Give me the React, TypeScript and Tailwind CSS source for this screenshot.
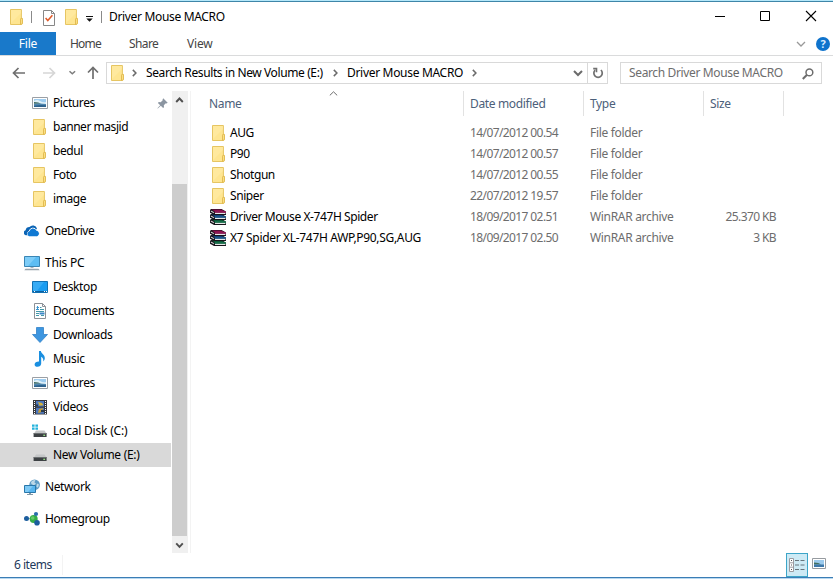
import React from 'react';

interface NavItem {
  label: string;
  icon: React.ReactNode;
  root?: boolean;
  pinned?: boolean;
  selected?: boolean;
  tracking?: string;
}

interface FileRow {
  name: string;
  date: string;
  type: string;
  size?: string;
  tracking?: string;
}

// === Icons ===

function Folder() {
  return (
    <svg width="16" height="16" viewBox="0 0 16 16" className="shrink-0">
      <path d="M1.5 .5h10.9v10l.1 5H1.5z" fill="#fee591" stroke="#e6c562" />
      <path d="M2 1h10v3L2 14z" fill="#ffeba6" opacity=".6" />
      <path d="M11.5 10.2q0-.8.8-.8h1.2v5.3l-2 .9z" fill="#fbdf83" stroke="#e0b84c" strokeWidth=".9" />
    </svg>
  );
}

function Picture() {
  return (
    <svg width="16" height="16" viewBox="0 0 16 16" className="shrink-0">
      <path d="M.5 2.5h15v11H.5z" fill="#fff" stroke="#9a9fa5" />
      <path d="M2 4h12v8H2z" fill="#9fcdf0" />
      <path d="M2 6q3-2 6 0t6 1v2H2z" fill="#e0f1f9" />
      <path d="M2 7q5 .2 7 1.8H2z" fill="#3d6961" />
      <path d="M2 9q6-1 12 0v3H2z" fill="#5087b0" />
      <path d="M2 10.8q6-1.4 12-.6V12H2z" fill="#2e628d" />
    </svg>
  );
}

function OneDrive() {
  return (
    <svg width="16" height="16" viewBox="0 0 16 16" className="shrink-0">
      <path d="M1.8 12.2A2.6 2.6 0 0 1 1.6 7.2 3.9 3.9 0 0 1 5.5 4 4.4 4.4 0 0 1 13 5.5L8 12z" fill="#0b64b5" />
      <path d="M5.6 13.5a2.8 2.8 0 0 1-.3-5.4 3.8 3.8 0 0 1 7.2-.7 3.1 3.1 0 0 1 .4 6.1z" fill="#1079d3" stroke="#fff" />
      <path d="M5.7 13.2a2.4 2.4 0 1 1 .1-4.8 3.4 3.4 0 0 1 6.4-.6 2.8 2.8 0 0 1 .8 5.4z" fill="#1079d3" />
    </svg>
  );
}

function ThisPc() {
  return (
    <svg width="16" height="16" viewBox="0 0 16 16" className="shrink-0">
      <path d="M.5 1.5h15v10H.5z" fill="#5dbdf3" stroke="#3a86b5" />
      <path d="M1 2h11L4 11H1z" fill="#8dd4fa" opacity=".7" />
      <path d="M6.5 12h3v1h-3z" fill="#a9b4bd" />
      <path d="M1.5 13.8h13l1.2 1.4H.3z" fill="#98a4ad" />
    </svg>
  );
}

function Desktop() {
  return (
    <svg width="16" height="16" viewBox="0 0 16 16" className="shrink-0">
      <path d="M.5 2.5h15v11H.5z" fill="#1b9df1" stroke="#1272b4" />
      <path d="M1 3h11L5 12H1z" fill="#4cb5f8" opacity=".6" />
      <path d="M1 12h14v1H1z" fill="#0d5f9e" />
      <path d="M2 12h1v1H2zM12 12h1v1h-1zM14 12h1v1h-1z" fill="#fff" />
    </svg>
  );
}

function Document() {
  return (
    <svg width="16" height="16" viewBox="0 0 16 16" className="shrink-0">
      <path d="M2.5 .5h8l3 3v12h-11z" fill="#fff" stroke="#8c9197" />
      <path d="M10.5 .5v3h3" fill="none" stroke="#8c9197" />
      <path d="M4 6.5h3M4.5 4.5H7M5.5 3v3" stroke="#3b95cf" fill="none" />
      <path d="M8 6.5h4M8 4.5h1.5M4 8.5h8M4 10.5h3M4 12.5h3M9 12.5h3" stroke="#49a" fill="none" />
      <path d="M7.5 9.5h5v2h-5z" fill="#3a87c8" />
    </svg>
  );
}

function Download() {
  return (
    <svg width="16" height="16" viewBox="0 0 16 16" className="shrink-0">
      <path d="M4.5 .5h7v7h4L8 15.5.5 7.5h4z" fill="#3d96e0" stroke="#3182c8" strokeWidth=".8" />
    </svg>
  );
}

function Music() {
  return (
    <svg width="16" height="16" viewBox="0 0 16 16" className="shrink-0">
      <path d="M7 0h1.9c.3 2.7 3.9 3.6 3.9 7 0 1.7-.7 2.6-1.6 3.5.5-2.7-.6-4-2-4.8v6.8c0 2-1.7 3.3-3.7 3.3-1.7 0-2.9-.9-2.9-2.3 0-1.9 2-3.2 4.4-3.1z" fill="#1a8fe0" />
    </svg>
  );
}

function Video() {
  return (
    <svg width="16" height="16" viewBox="0 0 16 16" className="shrink-0">
      <path d="M1 1h14v14.5H1z" fill="#37383c" />
      <path d="M4 2h8v5.5H4zM4 8.7h8v6H4z" fill="#4b76bd" />
      <path d="M6 3l4 1 1.5 2.2-4 .6z" fill="#d3b13b" />
      <path d="M7 10l4-1-1 4-4 1z" fill="#c69c32" />
      <path d="M4 5.5h2v2H4zM9 11h3v2H9z" fill="#283b50" />
      <path d="M2.5 2v13M13.5 2v13" stroke="#fff" strokeDasharray="1 1" />
    </svg>
  );
}

function Drive({ system = false }: { system?: boolean }) {
  return (
    <svg width="16" height="16" viewBox="0 0 16 16" className="shrink-0">
      {system && <path d="M0 1.5h2.6v2.2H0zM3.4 1.5H6v2.2H3.4zM0 4.5h2.6v2.2H0zM3.4 4.5H6v2.2H3.4z" fill="#24b3dc" />}
      <path d="M4 7.5h8.5l2 3H2z" fill="#c4c6c7" />
      <path d="M1.6 10h13v4h-13z" fill="#3d4144" />
      <path d="M1.6 10h13v.8h-13z" fill="#777b7d" />
      <path d="M11.3 11.7h1.8v1.2h-1.8z" fill="#9ff08e" />
    </svg>
  );
}

function Network() {
  return (
    <svg width="16" height="16" viewBox="0 0 16 16" className="shrink-0">
      <circle cx="10.6" cy="5.8" r="5.3" fill="#5e9cc6" />
      <path d="M7 3q2-2.4 4.4-2l-1 2.4 1.6 1-2 2.2L7.4 5zM13 4.6l2 1-1 3.2-1.6-1z" fill="#bed9e8" />
      <path d="M.5 6.5h11v7H.5z" fill="#58b5ef" stroke="#2977aa" />
      <path d="M1 7h8l-5 6H1z" fill="#8fd2f8" opacity=".7" />
      <path d="M5 14h2v1H5zM3 15h6v1H3z" fill="#8298a7" />
    </svg>
  );
}

function Homegroup() {
  return (
    <svg width="16" height="16" viewBox="0 0 16 16" className="shrink-0">
      <path d="M2.5 7.5H9M12 3l-2 5 3 4" stroke="#8fb5c6" fill="none" />
      <circle cx="9.7" cy="8" r="4" fill="#35ae47" />
      <circle cx="8.7" cy="7" r="1.8" fill="#67cb68" />
      <circle cx="2.5" cy="7.6" r="2.5" fill="#1c5d9e" />
      <circle cx="12" cy="3" r="2.1" fill="#2a6dac" />
      <circle cx="13" cy="11.7" r="2.8" fill="#1c5d9e" />
    </svg>
  );
}

// stack of three books, drawn bottom up so each cover hides the one below
function WinRar() {
  const books = [
    { y: 10, dark: '#0b5a38', light: '#1d9562' },
    { y: 5, dark: '#123f78', light: '#2474b4' },
    { y: 0, dark: '#8c0f4e', light: '#b81f6c' },
  ];
  return (
    <svg width="16" height="16" viewBox="0 0 16 16" className="shrink-0">
      {books.map((b) => (
        <g key={b.y} transform={`translate(0 ${b.y})`}>
          <path d="M0 1L1 0h10.5L16 2.4V6H4L0 3.8z" fill="#17131a" />
          <path d="M1.4 .6h9.8l4 1.9H5z" fill={b.dark} />
          <path d="M4.6 2.4H16v1.3H4.6z" fill={b.light} />
          <path d="M5 3.9h10.4v1.1H5z" fill="#e6e6e6" />
          <path d="M.8 1.5l3 1.5v1.2L.8 2.6z" fill="#e2dfe2" />
        </g>
      ))}
    </svg>
  );
}

function Pin() {
  return (
    <svg width="11" height="11" viewBox="0 0 11 11" className="shrink-0">
      <path d="M6.2.3l4.5 4.5-1.2.6-.7-.1-2 2 .2 1.9-.9.9-2.3-2.3L.8 10.6l-.4-.4 2.8-3L.9 4.9l.9-.9 1.9.2 2-2-.1-.7z" fill="#8b95a1" />
    </svg>
  );
}

function Crumb({ className = '' }: { className?: string }) {
  return (
    <svg width="5" height="8" viewBox="0 0 5 8" className={`shrink-0 ${className}`}>
      <path d="M.8 .9L3.9 4 .8 7.1" fill="none" stroke="#6b6b6b" strokeWidth="1.5" />
    </svg>
  );
}

const navGroups: NavItem[][] = [
  [
    { label: 'Pictures', icon: <Picture />, pinned: true },
    { label: 'banner masjid', icon: <Folder />, tracking: 'tracking-[-0.46px]' },
    { label: 'bedul', icon: <Folder /> },
    { label: 'Foto', icon: <Folder /> },
    { label: 'image', icon: <Folder /> },
  ],
  [{ label: 'OneDrive', icon: <OneDrive />, root: true, tracking: 'tracking-[-0.5px]' }],
  [
    { label: 'This PC', icon: <ThisPc />, root: true, tracking: 'tracking-[-0.2px]' },
    { label: 'Desktop', icon: <Desktop /> },
    { label: 'Documents', icon: <Document /> },
    { label: 'Downloads', icon: <Download /> },
    { label: 'Music', icon: <Music />, tracking: 'tracking-[-0.2px]' },
    { label: 'Pictures', icon: <Picture /> },
    { label: 'Videos', icon: <Video /> },
    { label: 'Local Disk (C:)', icon: <Drive system />, tracking: 'tracking-[-0.2px]' },
    { label: 'New Volume (E:)', icon: <Drive />, selected: true, tracking: 'tracking-[-0.31px]' },
  ],
  [{ label: 'Network', icon: <Network />, root: true }],
  [{ label: 'Homegroup', icon: <Homegroup />, root: true }],
];

const files: FileRow[] = [
  { name: 'AUG', date: '14/07/2012 00.54', type: 'File folder' },
  { name: 'P90', date: '14/07/2012 00.57', type: 'File folder' },
  { name: 'Shotgun', date: '14/07/2012 00.55', type: 'File folder' },
  { name: 'Sniper', date: '22/07/2012 19.57', type: 'File folder' },
  { name: 'Driver Mouse X-747H Spider', date: '18/09/2017 02.51', type: 'WinRAR archive', size: '25.370 KB' },
  { name: 'X7 Spider XL-747H AWP,P90,SG,AUG', date: '18/09/2017 02.50', type: 'WinRAR archive', size: '3 KB', tracking: 'tracking-[-0.32px]' },
];

function TitleBar() {
  return (
    <div className="flex h-[30px] items-center pl-[9px] text-black">
      <Folder />
      <span className="ml-[6px] h-3 w-px bg-[#8a8a8a]" />
      <svg width="12" height="16" viewBox="0 0 12 16" className="ml-[11px] mt-px shrink-0">
        <path d="M.5 .5h8l3 3v12H.5z" fill="#fff" stroke="#878787" />
        <path d="M8.5 .5v3h3" fill="none" stroke="#878787" />
        <path d="M2.6 8l2.2 2.6L9.4 5.2" fill="none" stroke="#df5b2b" strokeWidth="1.5" />
      </svg>
      <span className="ml-[9px] flex"><Folder /></span>
      <svg width="7" height="6" viewBox="0 0 7 6" className="ml-[6px] mt-[3px] shrink-0">
        <path d="M0 0h7v1.1H0zM.3 2.5h6.4L3.5 5.8z" fill="#111" />
      </svg>
      <span className="ml-2 h-3 w-px bg-[#8a8a8a]" />
      <span className="ml-[7px] grow tracking-[-0.33px]">Driver Mouse MACRO</span>
      <svg width="119" height="30" viewBox="0 0 119 30" fill="none" stroke="#000" className="shrink-0">
        <path d="M1 14.5h10M46.5 9.5h9v9h-9z" />
        <path d="M92 9l10 10M102 9L92 19" strokeWidth="1.1" />
      </svg>
    </div>
  );
}

function RibbonTabs() {
  return (
    <div className="flex h-6 items-center border-b border-[#dadbdc] text-[#444]">
      <span className="flex h-[23px] w-14 items-center justify-center bg-[#1979ca] tracking-[-0.2px] text-white">File</span>
      <span className="w-[59px] pl-[14px] tracking-[-0.8px]">Home</span>
      <span className="w-[58px] pl-[14px] tracking-[-0.6px]">Share</span>
      <span className="grow pl-[14px] tracking-[-0.2px]">View</span>
      <svg width="10" height="6" viewBox="0 0 10 6" className="mr-[10px]">
        <path d="M1 1l4 4 4-4" fill="none" stroke="#999" strokeWidth="1.3" />
      </svg>
      <span className="mr-[3px] flex h-[14px] w-[14px] items-center justify-center rounded-full bg-[#0f73cc] text-[11px] leading-none font-bold text-[#d9ecff]">?</span>
    </div>
  );
}

function AddressBar() {
  return (
    <div className="flex h-[35px] items-start pt-[6px]">
      <svg width="106" height="22" viewBox="0 0 106 22" fill="none" className="shrink-0">
        <path d="M25 11H14M18.5 6L13.5 11l5 5" stroke="#6f6f6f" strokeWidth="1.7" />
        <path d="M43 11h11M49.5 6l5 5-5 5" stroke="#d6d6d6" strokeWidth="1.7" />
        <path d="M69.5 9.2l2.8 2.6 2.8-2.6" stroke="#7d7d7d" strokeWidth="1.5" />
        <path d="M93 17V6M88 10.5L93 5.5l5 5" stroke="#6f6f6f" strokeWidth="1.7" />
      </svg>
      <div className="flex h-[22px] w-[502px] items-center border border-[#d9d9d9] text-black">
        <span className="ml-[3px] flex"><Folder /></span>
        <Crumb className="ml-[6px]" />
        <span className="ml-[9px] w-[187px] tracking-[-0.39px]">Search Results in New Volume (E:)</span>
        <Crumb />
        <span className="ml-[9px] w-[125px] tracking-[-0.31px]">Driver Mouse MACRO</span>
        <Crumb />
        <svg width="10" height="7" viewBox="0 0 10 7" className="mt-px ml-auto mr-[4px] shrink-0">
          <path d="M1 1l4 4 4-4" fill="none" stroke="#6b6b6b" strokeWidth="2" />
        </svg>
        <div className="flex h-5 w-[20px] items-center justify-center border-l border-[#d9d9d9]">
          <svg width="12" height="12" viewBox="0 0 12 12" fill="none" stroke="#707070" strokeWidth="1.7">
            <path d="M3.1 3.1A4.2 4.2 0 1 0 8.9 3" />
            <path d="M1.2 1.6h3.3v3.6" strokeWidth="1.6" />
          </svg>
        </div>
      </div>
      <div className="ml-3 flex h-[22px] w-[202px] items-center border border-[#d9d9d9] pl-2 text-[#6d6d6d]">
        <span className="grow tracking-[-0.36px]">Search Driver Mouse MACRO</span>
        <svg width="12" height="12" viewBox="0 0 12 12" fill="none" stroke="#6d6d6d" className="mr-[7px] mt-px shrink-0">
          <circle cx="7.4" cy="4.4" r="3.4" strokeWidth="1.5" />
          <path d="M5 6.8L.8 11" strokeWidth="2" />
        </svg>
      </div>
    </div>
  );
}

function NavPane() {
  return (
    <nav className="flex w-[171px] shrink-0 flex-col gap-2 text-black">
      {navGroups.map((group, i) => (
        <div key={i}>
          {group.map((item) => (
            <div
              key={item.label}
              className={`flex h-6 items-center gap-[5px] ${item.root ? 'pl-6' : 'pl-8'} ${item.selected ? 'bg-[#d9d9d9]' : ''}`}
            >
              {item.icon}
              <span className={`grow ${item.tracking ?? 'tracking-[-0.4px]'}`}>{item.label}</span>
              {item.pinned && <span className="mr-[3px]"><Pin /></span>}
            </div>
          ))}
        </div>
      ))}
    </nav>
  );
}

function ScrollBar() {
  return (
    <div className="ml-px flex w-4 shrink-0 flex-col bg-[#f0f0f0]">
      <svg width="16" height="93" viewBox="0 0 16 93" className="shrink-0">
        <path d="M4.2 11L7.5 7.5l3.3 3.5" fill="none" stroke="#505050" strokeWidth="1.9" />
      </svg>
      <div className="h-[352px] w-[15px] bg-[#cdcdcd]" />
      <svg width="16" height="17" viewBox="0 0 16 17" className="shrink-0">
        <path d="M4.2 7.3l3.3 3.5 3.3-3.5" fill="none" stroke="#505050" strokeWidth="1.9" />
      </svg>
    </div>
  );
}

function FileList() {
  return (
    <main className="ml-[2px] grow border-l border-[#f3f3f3]">
      <div className="flex h-[25px] items-center text-[#4c607a]">
        <div className="relative flex h-full w-[273px] items-center border-r border-[#e2e2e2] pl-[18px]">
          Name
          <svg width="9" height="5" viewBox="0 0 9 5" className="absolute top-0 left-[138px]">
            <path d="M.8 4.4L4.5 .8l3.7 3.6" fill="none" stroke="#6b6b6b" strokeWidth="1" />
          </svg>
        </div>
        <div className="flex h-full w-[120px] items-center border-r border-[#e2e2e2] pl-[6px]">Date modified</div>
        <div className="flex h-full w-[120px] items-center border-r border-[#e2e2e2] pl-[6px]">Type</div>
        <div className="flex h-full w-20 items-center border-r border-[#e2e2e2] pl-[6px]">Size</div>
      </div>
      <div className="pt-[6px] text-[#6d6d6d]">
        {files.map((file) => (
          <div key={file.name} className="flex h-[21px] items-center pl-[19px]">
            <div className="flex w-[260px] items-center text-black">
              <span className={`flex w-5 ${file.size ? '' : 'pl-px'}`}>{file.size ? <WinRar /> : <Folder />}</span>
              <span className={file.tracking ?? 'tracking-[-0.42px]'}>{file.name}</span>
            </div>
            <span className="w-[120px] tracking-[-0.6px]">{file.date}</span>
            <span className="w-[106px] tracking-[-0.32px]">{file.type}</span>
            <span className="w-20 text-right tracking-[-0.6px]">{file.size}</span>
          </div>
        ))}
      </div>
    </main>
  );
}

function StatusBar() {
  return (
    <div className="flex h-6 items-center pl-[14px] text-[#1e395b]">
      <span className="w-12 tracking-[-0.5px]">6 items</span>
      <span className="h-5 w-px bg-[#f3f3f3]" />
      <div className="ml-auto flex h-full w-[22px] items-center justify-center border border-[#3da5c8] bg-[#cdeaf5]">
        <svg width="16" height="14" viewBox="0 0 16 14" fill="none">
          <path d="M.5 .5h4v13h-4zM.5 4.8h4M.5 9.2h4" fill="#fff" stroke="#9b9ba0" />
          <path d="M2 2h1v1H2zM2 6.5h1v1H2zM2 11h1v1H2z" fill="#555" />
          <path d="M6 2.5h4M11.5 2.5h4M6 7h4M11.5 7h4M6 11.5h4M11.5 11.5h4" stroke="#67757d" />
        </svg>
      </div>
      <svg width="14" height="11" viewBox="0 0 14 11" className="mr-[7px] ml-1 -mt-1 shrink-0">
        <path d="M.5 .5h13v10H.5z" fill="#fff" stroke="#969ba0" />
        <path d="M2 2h10v7H2z" fill="#9bcaed" />
        <path d="M2 4.5q5 0 7 2H2z" fill="#44705f" />
        <path d="M2 6.5h10V9H2z" fill="#3e78a9" />
      </svg>
    </div>
  );
}

export default function App() {
  return (
    <div className="flex h-[579px] w-[833px] flex-col overflow-hidden border-t border-[#b5e8fa] bg-white font-['Noto_Sans','Open_Sans',sans-serif] text-[12px] leading-4 tracking-[-0.35px] whitespace-nowrap">
      <div className="h-px bg-[#3f86a8]" />
      <TitleBar />
      <RibbonTabs />
      <AddressBar />
      <div className="flex h-[462px]">
        <NavPane />
        <ScrollBar />
        <FileList />
      </div>
      <StatusBar />
      <div className="h-px bg-[#3b7db5]" />
      <div className="h-px bg-[#b8d8f0]" />
    </div>
  );
}
